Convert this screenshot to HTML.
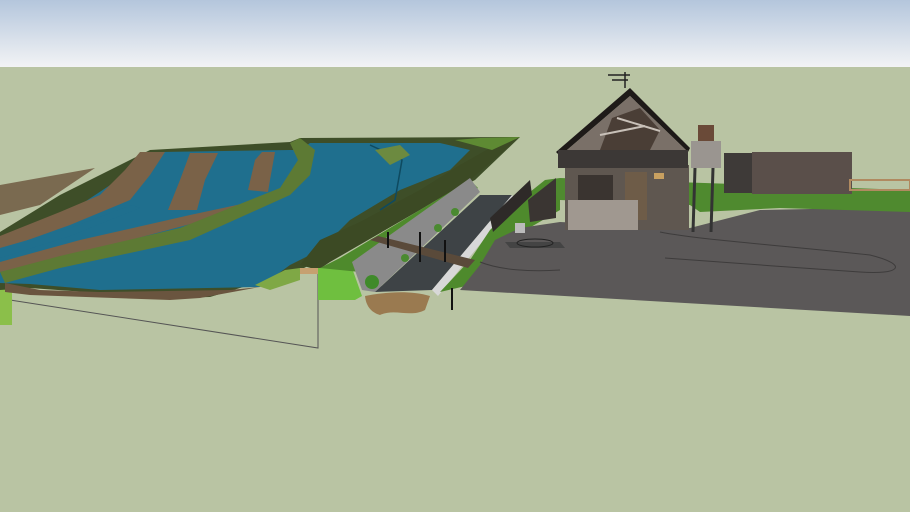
<!DOCTYPE html>
<html><head><style>html,body{margin:0;padding:0;width:910px;height:512px;overflow:hidden;background:#b9c4a3}</style></head>
<body>
<svg width="910" height="512" viewBox="0 0 910 512" xmlns="http://www.w3.org/2000/svg">
<defs>
<linearGradient id="sky" x1="0" y1="0" x2="0" y2="1"><stop offset="0" stop-color="#b4c6dc"/><stop offset="1" stop-color="#f2f3f5"/></linearGradient>
</defs>
<rect x="0" y="0" width="910" height="67" fill="url(#sky)"/>
<rect x="0" y="67" width="910" height="445" fill="#b9c4a3"/>
<!-- brown slab left -->
<polygon points="0,185 95,168 40,205 0,215" fill="#7a6a50"/>
<!-- outline box -->
<polyline points="10,300 318,348 318,268" fill="none" stroke="#555" stroke-width="1"/>
<polygon points="0,270 12,268 12,325 0,325" fill="#8bbf4a"/>
<!-- terrain base dark -->
<polygon points="0,232 60,195 150,150 290,142 300,138 520,137 475,180 330,255 300,270 210,297 170,298 30,288 0,290" fill="#3e4e28"/>
<!-- water -->
<polygon points="0,240 80,205 160,152 290,150 300,150 310,143 440,143 470,150 450,170 400,190 350,220 320,250 290,265 260,287 100,290 30,284 0,283" fill="#1f6f8e"/>
<!-- striped terraces left -->
<polygon points="0,236 60,212 100,195 125,170 140,152 165,152 150,175 130,200 70,225 0,250" fill="#7a6248"/>
<polygon points="0,248 70,228 132,205 140,208 70,236 0,258" fill="#1f6f8e"/>
<polygon points="168,210 180,180 190,153 218,153 205,180 197,210" fill="#7a6248"/>
<polygon points="248,190 255,160 262,152 275,152 270,180 268,192" fill="#7a6248"/>
<polygon points="0,262 80,240 190,215 260,200 262,205 100,248 0,272" fill="#7a6248"/>
<!-- left grass ridge -->
<polygon points="0,272 60,256 180,228 280,188 298,160 290,143 300,138 315,150 310,175 290,195 190,240 60,268 5,283" fill="#5d7a34"/>
<!-- water lines -->
<path d="M370,145 L385,152 L402,160 L395,200 L380,210" fill="none" stroke="#0e4a60" stroke-width="1.5"/>
<!-- right dark ridge -->
<polygon points="300,265 320,240 360,222 420,190 460,165 490,148 518,137 505,150 470,180 420,210 330,262 318,270" fill="#3c4a24"/>
<polygon points="455,140 480,138 520,137 492,150" fill="#5e8a33"/>
<polygon points="375,150 400,145 410,155 390,165" fill="#6c8a40"/>
<!-- lower brown strip -->
<polygon points="5,283 40,290 100,292 230,290 260,287 200,298 170,300 30,295 5,292" fill="#6a553f"/>
<polygon points="255,285 285,270 300,268 300,280 270,290" fill="#7fa845"/>
<polygon points="300,268 318,268 318,274 300,274" fill="#c6a070"/>
<polygon points="318,268 352,268 362,296 355,300 318,300" fill="#6fbf3f"/>
<!-- green slope right of channel -->
<polygon points="320,268 340,258 470,180 478,188 360,272" fill="#4e8a2c"/>
<!-- channel wall grey -->
<polygon points="352,262 470,178 480,192 375,292 362,290" fill="#8a8a8a"/>
<!-- walkway dark -->
<polygon points="375,292 480,195 512,195 432,290" fill="#3e4346"/>
<polygon points="432,290 512,195 516,200 438,296" fill="#d8d8d8"/>
<!-- grass patch near walkway -->
<polygon points="440,292 470,260 490,230 520,200 545,180 560,180 560,210 500,245 470,285" fill="#4e8a2c"/>
<!-- asphalt -->
<polygon points="460,290 480,265 495,240 520,228 560,222 690,228 760,210 910,207 910,316 460,290" fill="#5b5858"/>
<!-- grass behind house -->
<polygon points="545,180 560,178 910,190 910,212 780,208 700,212 690,205 560,200" fill="#4f8a2f"/>
<path d="M660,232 C700,240 780,245 870,255 C910,265 900,275 860,272 C800,268 720,262 665,258" fill="none" stroke="#3e3c3c" stroke-width="1"/>
<path d="M480,262 C500,270 530,272 560,270" fill="none" stroke="#3e3c3c"/>
<!-- gravel bottom -->
<path d="M365,296 C385,292 410,290 430,296 L425,310 C410,318 395,308 380,315 C370,312 366,305 365,296Z" fill="#9a7a50"/>
<!-- bridge -->
<polygon points="370,240 378,236 475,260 468,268" fill="#5a4a3a"/>
<line x1="388" y1="232" x2="388" y2="248" stroke="#111" stroke-width="2"/>
<line x1="420" y1="232" x2="420" y2="262" stroke="#111" stroke-width="2"/>
<line x1="445" y1="240" x2="445" y2="262" stroke="#111" stroke-width="2"/>
<line x1="452" y1="288" x2="452" y2="310" stroke="#111" stroke-width="2"/>
<circle cx="372" cy="282" r="7" fill="#3f8a2a"/>
<circle cx="438" cy="228" r="4" fill="#4a8a30"/>
<circle cx="455" cy="212" r="4" fill="#4a8a30"/>
<circle cx="405" cy="258" r="4" fill="#4a8a30"/>
<!-- fences near walkway -->
<polygon points="490,218 530,180 532,195 493,232" fill="#2e2a28"/>
<polygon points="528,200 556,178 556,218 530,222" fill="#3a3532"/>
<polygon points="505,242 560,242 565,248 510,248" fill="#444"/>
<ellipse cx="535" cy="243" rx="18" ry="4" fill="none" stroke="#222"/>
<rect x="515" y="223" width="10" height="10" fill="#bbb"/>
<!-- shed -->
<rect x="724" y="153" width="28" height="40" fill="#3e3a38"/>
<rect x="752" y="152" width="100" height="42" fill="#5a4f4a"/>
<rect x="850" y="180" width="60" height="10" fill="none" stroke="#b08a60" stroke-width="2"/>
<!-- annex -->
<rect x="691" y="141" width="30" height="27" fill="#9a9590"/>
<rect x="698" y="125" width="16" height="16" fill="#6a4a38"/>
<line x1="695" y1="168" x2="693" y2="232" stroke="#333" stroke-width="3"/>
<line x1="713" y1="168" x2="711" y2="232" stroke="#333" stroke-width="3"/>
<!-- house -->
<rect x="565" y="165" width="124" height="65" fill="#5f5750"/>
<polygon points="556,152 630,88 690,148 688,152 630,96 560,156" fill="#1e1a18"/>
<polygon points="560,156 630,96 688,152" fill="#7a7068"/>
<polygon points="600,150 612,118 640,108 660,130 650,150" fill="#4a3e36"/>
<line x1="600" y1="135" x2="645" y2="126" stroke="#c8c0b8" stroke-width="2"/>
<line x1="617" y1="118" x2="660" y2="131" stroke="#c8c0b8" stroke-width="2"/>
<polygon points="558,150 688,150 688,168 558,168" fill="#3c3836"/>
<rect x="625" y="172" width="22" height="48" fill="#6e5c48"/>
<rect x="578" y="175" width="35" height="25" fill="#3a3430"/>
<rect x="568" y="200" width="70" height="30" fill="#a09890"/>
<rect x="654" y="173" width="10" height="6" fill="#c8a060"/>
<line x1="625" y1="72" x2="625" y2="88" stroke="#222" stroke-width="1.5"/>
<line x1="608" y1="75" x2="630" y2="75" stroke="#222" stroke-width="1.5"/>
<line x1="612" y1="80" x2="628" y2="80" stroke="#222" stroke-width="1.5"/>
</svg>
</body></html>
